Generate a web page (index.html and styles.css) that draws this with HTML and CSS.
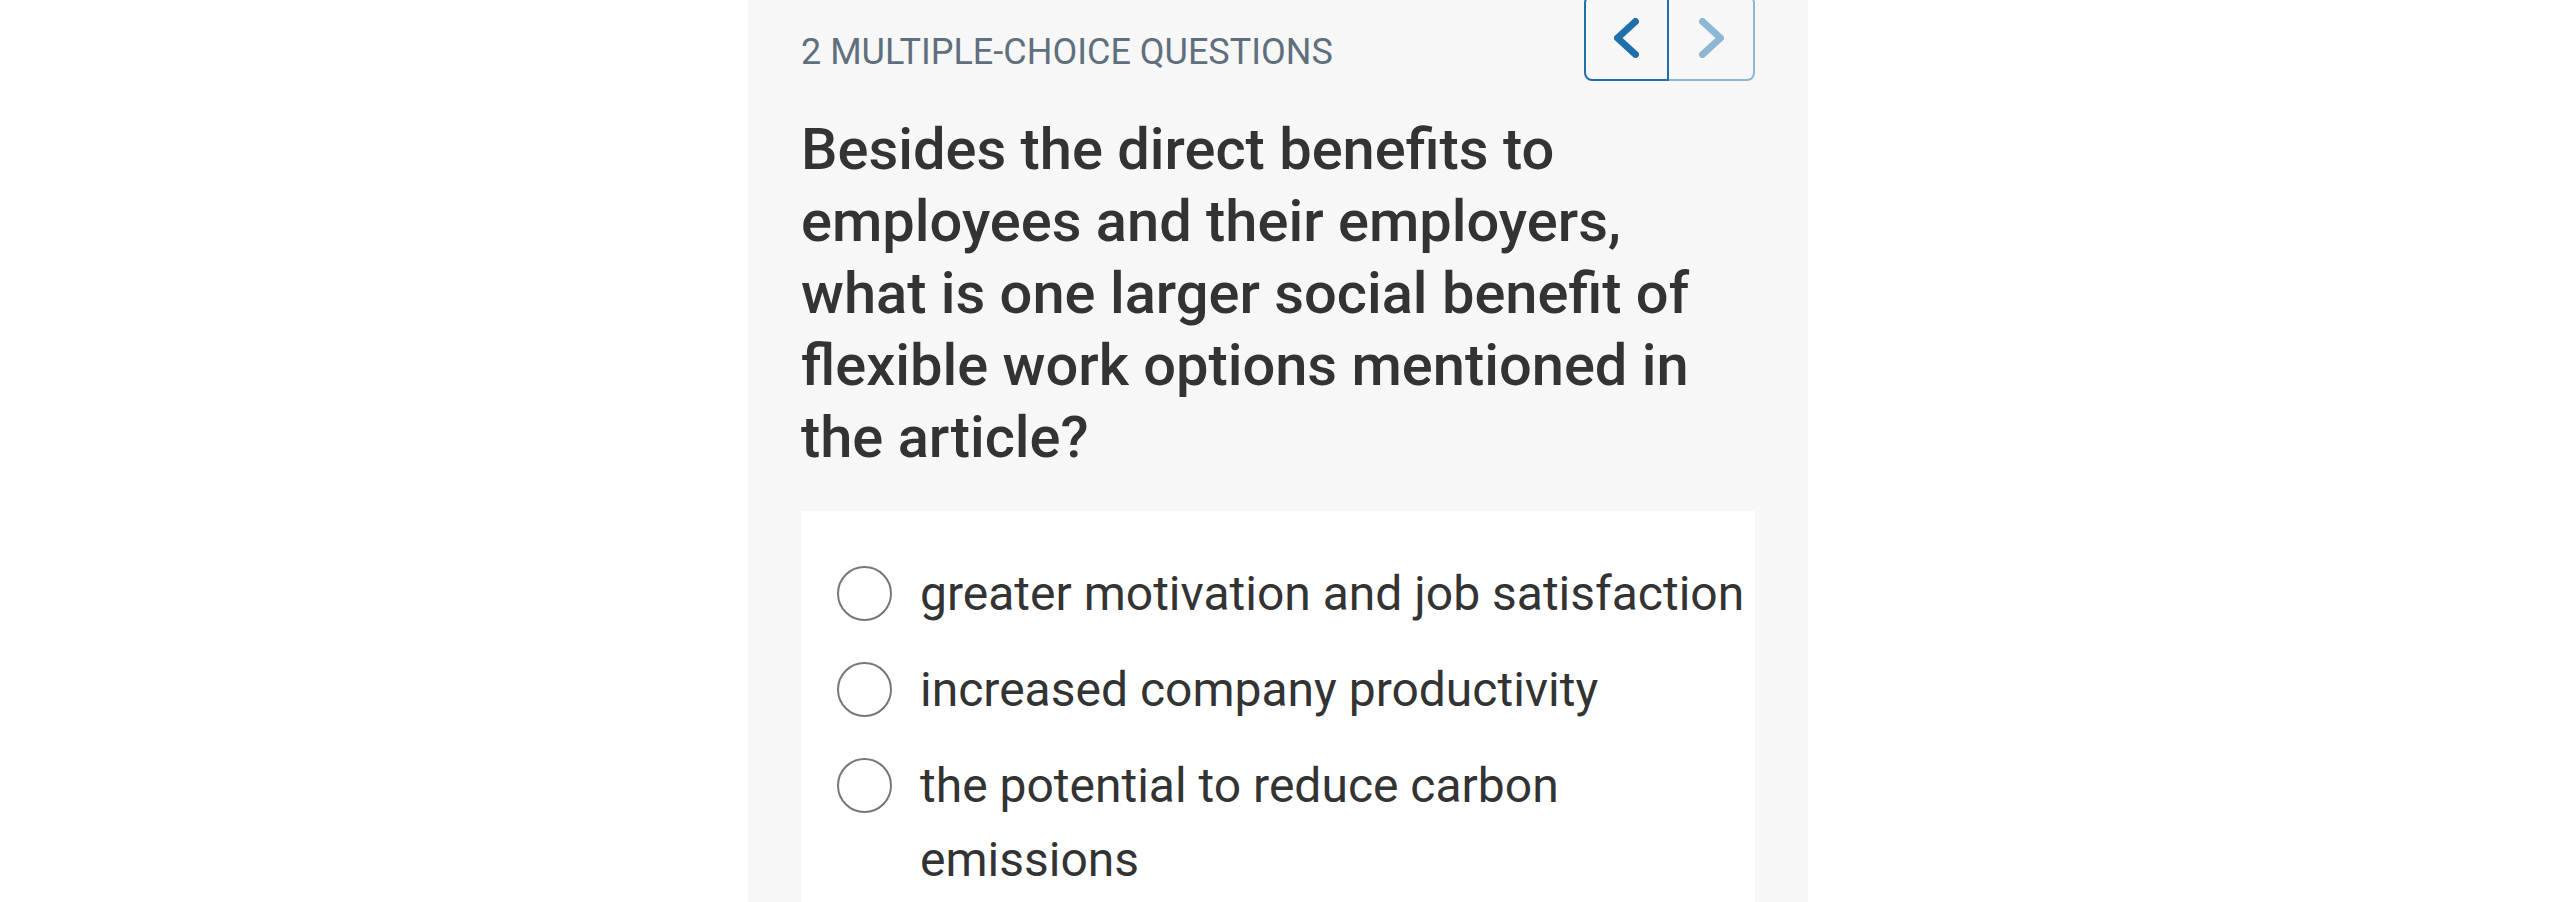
FILE: index.html
```html
<!DOCTYPE html>
<html lang="en">
<head>
<meta charset="utf-8">
<title>Questions</title>
<link rel="stylesheet" href="styles.css">
</head>
<body>
<main class="panel">
  <div class="panel-head">
    <span class="count">2 MULTIPLE-CHOICE QUESTIONS</span>
    <div class="pager">
      <button class="pager-btn prev" type="button" aria-label="Previous">
        <svg width="25" height="40" viewBox="0 0 25 40"><path d="M21.5 3.5 L3.5 20 L21.5 36.5" fill="none" stroke="currentColor" stroke-width="7" stroke-linecap="round" stroke-linejoin="round"/></svg>
      </button>
      <button class="pager-btn next" type="button" aria-label="Next">
        <svg width="25" height="40" viewBox="0 0 25 40"><path d="M3.5 3.5 L21.5 20 L3.5 36.5" fill="none" stroke="currentColor" stroke-width="7" stroke-linecap="round" stroke-linejoin="round"/></svg>
      </button>
    </div>
  </div>
  <h2 class="question">Besides the direct benefits to employees and their employers, what is one larger social benefit of flexible work options mentioned in the article?</h2>
  <div class="choices">
    <label class="choice"><span class="radio"></span><span class="choice-text">greater motivation and job satisfaction</span></label>
    <label class="choice"><span class="radio"></span><span class="choice-text">increased company productivity</span></label>
    <label class="choice"><span class="radio"></span><span class="choice-text">the potential to reduce carbon emissions</span></label>
  </div>
</main>
</body>
</html>
```

FILE: styles.css
```css
html, body {
  margin: 0;
  padding: 0;
  background: #ffffff;
}

body {
  font-family: Roboto, "Liberation Sans", sans-serif;
  color: #333333;
}

.panel {
  box-sizing: border-box;
  width: 1060px;
  min-height: 100vh;
  margin: 0 auto;
  padding: 0 53px;
  background: #f7f7f7;
  overflow: hidden;
}

.panel-head {
  display: flex;
  justify-content: space-between;
  align-items: flex-start;
}

.count {
  margin-top: 31px;
  font-size: 36px;
  line-height: 1.2;
  color: #5f6f7d;
  font-weight: 400;
}

.pager {
  display: flex;
  margin-top: -5px;
}

.pager-btn {
  box-sizing: border-box;
  height: 86px;
  padding: 0;
  margin: 0;
  background: transparent;
  display: flex;
  align-items: center;
  justify-content: center;
  cursor: pointer;
}

.pager-btn.prev {
  width: 85px;
  border: 2px solid #1f70aa;
  border-radius: 8px 0 0 8px;
  color: #1f70aa;
}

.pager-btn.next {
  width: 86px;
  border: 2px solid #8db7d4;
  border-left: none;
  border-radius: 0 8px 8px 0;
  color: #8db7d4;
}

.question {
  margin: 32px 0 38px;
  font-size: 57.8px;
  line-height: 72px;
  font-weight: 500;
  color: #333333;
}

.choices {
  background: #ffffff;
  padding: 46px 4px 40px 36px;
  display: flex;
  flex-direction: column;
  gap: 22px;
}

.choice {
  display: flex;
  align-items: flex-start;
  gap: 28px;
  cursor: pointer;
}

.radio {
  box-sizing: border-box;
  flex-shrink: 0;
  width: 55px;
  height: 55px;
  margin-top: 9px;
  border: 2.5px solid #777777;
  border-radius: 50%;
  background: #ffffff;
}

.choice-text {
  font-size: 48px;
  line-height: 74px;
  color: #333333;
}
```
